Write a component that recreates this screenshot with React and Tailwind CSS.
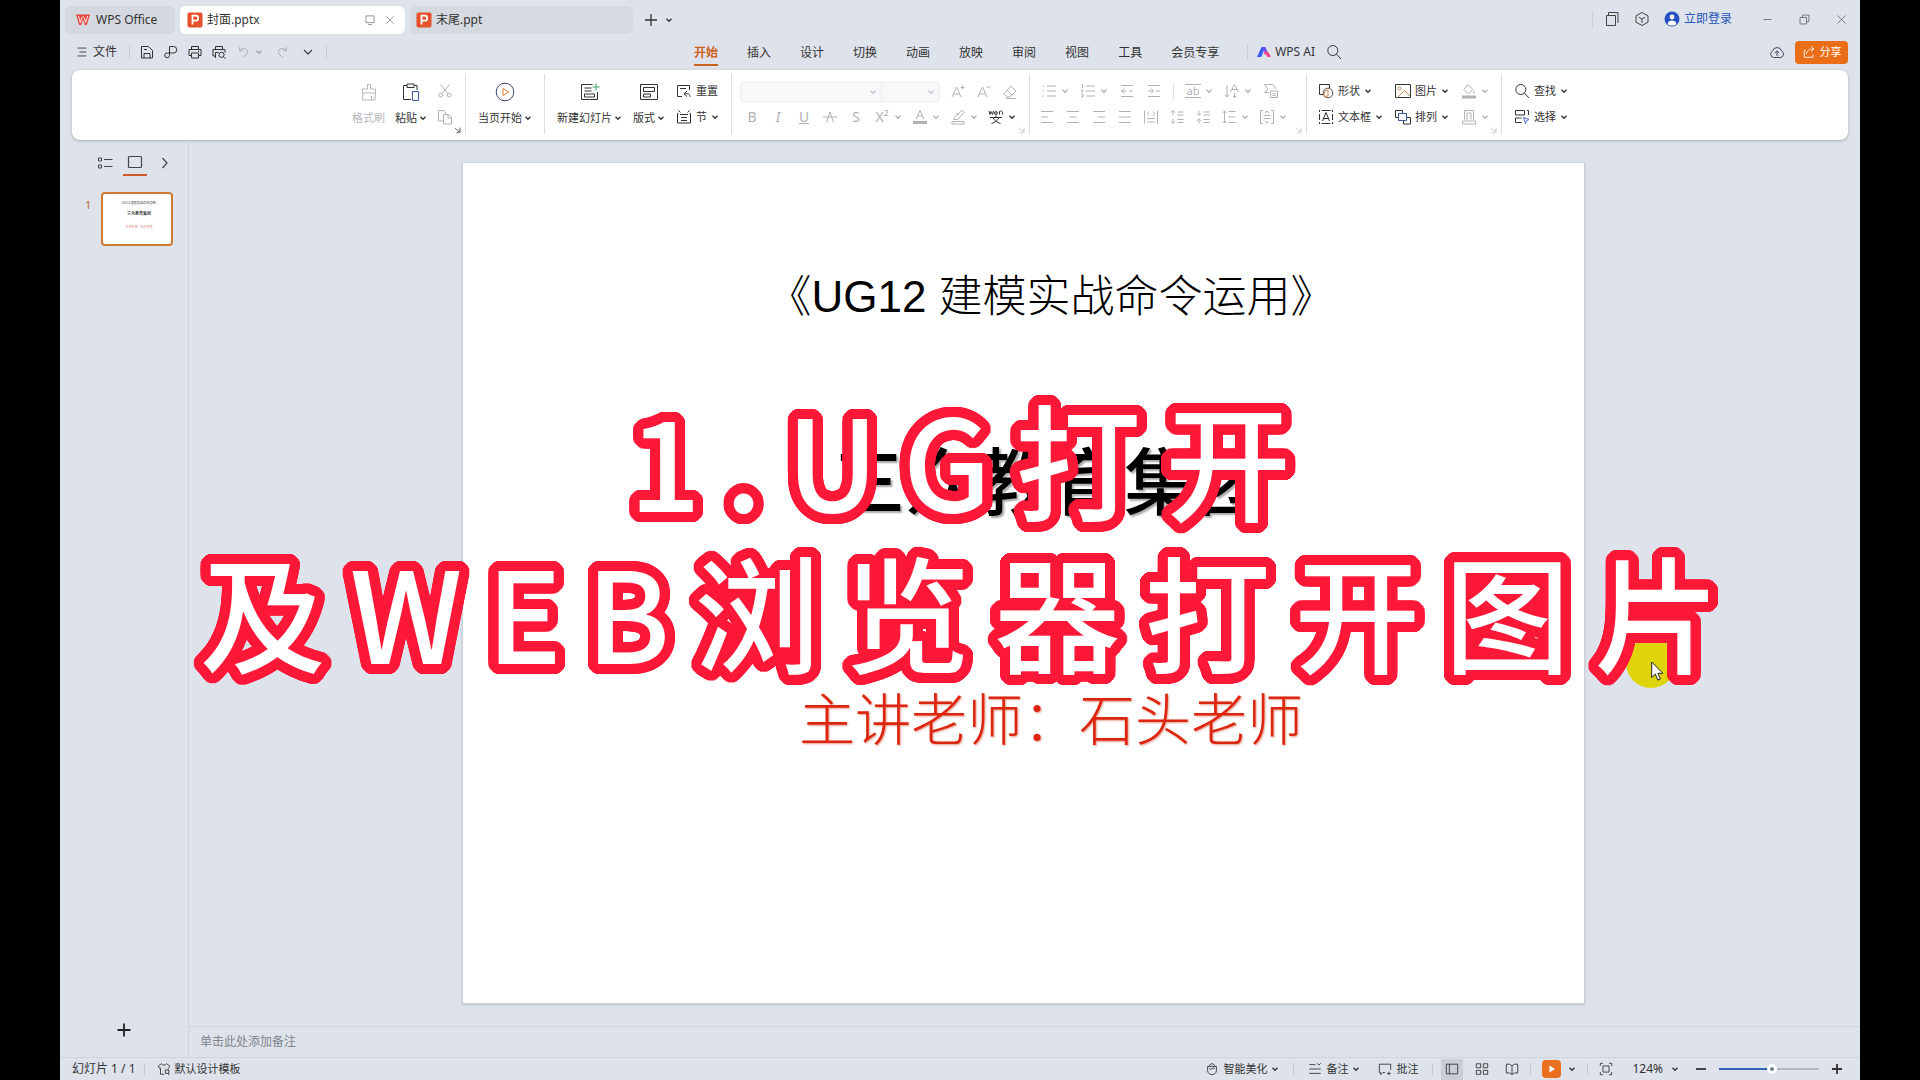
import React from "react";

/* ---------- icon helpers ---------- */
function Icon({ children, className = "size-4", box = 16, sw = 1 }) {
  return (
    <svg
      viewBox={`0 0 ${box} ${box}`}
      className={`shrink-0 ${className}`}
      fill="none"
      stroke="currentColor"
      strokeWidth={sw}
      aria-hidden="true"
    >
      {children}
    </svg>
  );
}

function Chevron({ className = "size-2" }) {
  return (
    <Icon box={8} sw={1.4} className={className}>
      <path d="M1.5 2.8 4 5.3 6.5 2.8" />
    </Icon>
  );
}

const WpsLogo = () => (
  <svg viewBox="0 0 16 16" className="size-4 shrink-0" aria-hidden="true">
    <path d="M1 2.500H15L11.800 13H9.800L8 7.500 6.200 13H4.200z" fill="#e5443b" />
    <path d="M3.500 4 5.300 10.500 7.300 4.500M8.600 4.500l2.100 6L12.600 4" fill="none" stroke="#fff" strokeWidth="0.900" />
  </svg>
);

const PptLogo = () => (
  <svg viewBox="0 0 16 16" className="size-4 shrink-0" aria-hidden="true">
    <rect x="0.5" y="0.5" width="15" height="15" rx="2" fill="#e4512b" />
    <path d="M5.5 12.5V3.7h3.200a2.500 2.500 0 0 1 0 5H5.5" fill="none" stroke="#fff" strokeWidth="1.8" />
  </svg>
);

const AiLogo = () => (
  <svg viewBox="0 0 16 16" className="size-4 shrink-0" aria-hidden="true">
    <path d="M1 13 5.600 3h3.700L5.300 13z" fill="#3c5cf5" />
    <path d="M6.600 3h2.800l2.200 5-3 .6z" fill="#6d4cf0" />
    <path d="M8.400 7.800c3-1 5 .6 6.300 5.200h-3.400c-.6-2.200-1.200-2.800-3.400-3z" fill="#f0428e" />
  </svg>
);

const icons = {
  menu: <path d="M3 3.5h10M5 8h8M3 12.5h10" />,
  save: <path d="M2.5 14V2.5h7l4 4V14zM5 14v-4.500h6V14M5 5.500h3" />,
  pdf: <path d="M6.500 9V2.500h4a3.200 3.200 0 0 1 0 6.500H4.500a2.400 2.400 0 1 0 2 2.600V9" />,
  print: <path d="M4.500 5V2.500h7V5M4 11.500H2V5.500h12v6h-2M4.500 9h7v5h-7zM11 7.300h1.200" />,
  preview: (
    <>
      <path d="M4.500 5V2.500h7V5M4.500 12H2V5.500h12v3M4.500 14V8.500h3" />
      <circle cx="10.500" cy="10.800" r="2.600" />
      <path d="m12.500 12.800 2 2" />
    </>
  ),
  undo: <path d="M3 2.500v4h4M3.200 6.300C6 2.500 12.500 3.500 12 8.300c-.3 2.500-2.500 4-5 5.700" />,
  redo: <path d="M13 2.500v4H9M12.800 6.300C10 2.500 3.500 3.500 4 8.300c.3 2.500 2.500 4 5 5.700" />,
  search: (
    <>
      <circle cx="6.800" cy="6.500" r="5" />
      <path d="m10.500 10.200 4.500 4.800" />
    </>
  ),
  cloud: <path d="M4.500 13.500a3.500 3.500 0 0 1-1-6.500 4.800 4.800 0 0 1 9.200 0 3.500 3.500 0 0 1-1 6.500zM8 12V7M5.800 9 8 6.800 10.200 9" />,
  share: <path d="M4.500 6H2.500v8h10v-3M5 10.500C5.500 6.500 8 4.500 13.500 4.500M10.500 1.500l3.200 3-3.200 3" />,
  monitor: <path d="M2.500 2.500h11v9h-11zM5.500 14h5" />,
  close: <path d="m3 3 10 10M13 3 3 13" />,
  min: <path d="M3 8h10" />,
  restore: <path d="M2.500 5.500h8v8h-8zM5.500 5.500v-3h8v8h-3" />,
  stack: <path d="M2.500 4.500h9v10h-9zM4.500 4V1.500h9.500V12" />,
  cube: <path d="M8 1.500 14 4.800v6.400L8 14.500 2 11.200V4.800zM4.800 6.200 8 8l3.200-1.800M8 8v4" />,
  cut: (
    <>
      <path d="M3.500 1.500 10.800 10.500M12.500 1.500 5.200 10.500" />
      <circle cx="3.800" cy="12" r="2" />
      <circle cx="12.200" cy="12" r="2" />
    </>
  ),
  copy: <path d="M6 12H1.500V1.500h5l2.500 2.500v1M6.500 5.500h5l3 3V15h-8zM11 5.500v3.500h3.500" />,
  reset: <path d="M6 13.500H1.500v-11h12V7M4 5.500h6M8 10.800l3-2.800M8 10.800l3 2.700M8 10.800h3.500c1.500 0 2.500 1.200 2.500 3" />,
  section: <path d="M1.500 4.500h1M1.500 4.500v9.500h13V4.500h-1M4 5.500h8M5 8.500h6M5 11.500h6M2.500 1.500l2 2M13.500 1.500l-2 2" />,
  aPlus: <path d="M2 13 6.500 3 11 13M3.500 10h6M12.500 1.500v4M10.500 3.500h4" />,
  aMinus: <path d="M2 13 6.500 3 11 13M3.500 10h6M10.500 3h4" />,
  eraser: <path d="M9 2 14 7l-6 6H5L2 9.500zM5 6l5 5M4 14.500h10" />,
  strike: <path d="M1 8h14M4.500 13.500 8 3l3.500 10.500" />,
  bullets: <path d="M6 3h9M6 8h9M6 13h9M1.500 3h1.500M1.500 8h1.500M1.500 13h1.500" />,
  numbers: <path d="M6 3h9M6 8h9M6 13h9M1.500 1.500h1v3.500M1 7h1.800v1.500H1.200M1 11h2v3H1" />,
  outdent: <path d="M2 2.500h12M2 13.500h12M2.500 8h5M10 8h4M5 5.500 2.500 8 5 10.500" />,
  indent: <path d="M2 2.500h12M2 13.500h12M2 8h5M10 8h4M5 5.500 7.500 8 5 10.500" />,
  textDir: <path d="M3 2v12M1 11.500 3 14l2-2.500M6.500 9 10.500 1.500 14.500 9M8 6.500h5M10.500 10v4.500M9 13l1.500 1.500L12 13" />,
  smartArt: <path d="M6 9.500H1.500L5 6 1.500 1.500H10L12 4v2M7.500 8h7v6.500h-7zM9.500 10.500h3M9.500 12.500h3" />,
  left: <path d="M2 2.500h12M2 8h7M2 13.500h12" />,
  center: <path d="M2 2.500h12M4.500 8h7M2 13.500h12" />,
  right: <path d="M2 2.500h12M7 8h7M2 13.500h12" />,
  justify: <path d="M2 2.500h12M2 8h12M2 13.500h12" />,
  distribute: <path d="M1.500 1.500v13M14.500 1.500v13M4 9.500h8M4 13h8M6 2.500 4.500 4.500 6 6.500M10 2.500l1.500 2L10 6.500" />,
  spaceUp: <path d="M8.500 3h6M8.500 6h6M8.500 10.500h6M8.500 13.500h6M4 1.500V6M2 3.500l2-2 2 2M4 10v4.500M2 12.500l2 2 2-2" />,
  spaceDown: <path d="M8.500 3h6M8.500 6h6M8.500 10.500h6M8.500 13.500h6M4 1.500V6M2 4.500l2 2 2-2M4 10v4.500M2 12l2-2 2 2" />,
  lineSpace: <path d="M7.500 2.500h7M7.500 8h7M7.500 13.500h7M3.500 2v12M1.500 4l2-2 2 2M1.500 12l2 2 2-2" />,
  alignBox: <path d="M4 1.500H1.500v13H4M12 1.500h2.500v13H12M4.500 6.500h7M4.500 9.500h7M6 4l2-2 2 2M6 12l2 2 2-2" />,
  fitBox: <path d="M1.500 4.500v-3h3M11.500 1.500h3v3M14.500 11.500v3h-3M4.500 14.500h-3v-3M4.500 4.500h7v7h-7z" />,
  shirt: <path d="M5 2 1.500 4.500 3 7.500l1-.5v7h4M5 2c1 2 5 2 6 0l3.500 2.500L13 7.500M9.500 9h4v4h-4zM12.500 13l1.500 2" />,
  beauty: <path d="M3 5h10v5c0 2.500-2.500 4.500-5 4.500S3 12.500 3 10zM5 5c0-4 6-4 6 0M5 7.500c2 2 4-1 6-.5" />,
  notes: <path d="M1.500 3h7M1.500 8h13M1.500 13h13M10.500 1.500l2 2 2-2" />,
  comment: <path d="M8 12H5.500L3 14.500V12H1.500V2.500h13V9M10.500 13h4M12.500 11v4" />,
  normal: <path d="M1.500 2.500h13v11h-13zM5 2.500v11" />,
  grid: <path d="M1.500 2h5v4.500h-5zM9.500 2h5v4.500h-5zM1.500 9.500h5V14h-5zM9.500 9.500h5V14h-5z" />,
  book: <path d="M8 4.500 5.500 2.500h-4v10h4l2.500 2 2.500-2h4v-10h-4zM8 4.500v10" />,
};

function G({ name, className = "size-4" }) {
  return <Icon className={className}>{icons[name]}</Icon>;
}

/* ---------- ribbon pieces ---------- */
function Group({ children, className, launcher, faded }) {
  return (
    <div className={`relative flex h-[60px] items-center border-r border-[#dcdfe3] last:border-r-0 ${className}`}>
      {children}
      {launcher && (
        <span className={`absolute right-1 bottom-0 ${faded ? "text-[#c9ccd0]" : "text-[#666]"}`}>
          <Icon box={8} className="size-[7px]">
            <path d="M1 1l5 5M6 2.500V6.500H2.500M7 .5v6" />
          </Icon>
        </span>
      )}
    </div>
  );
}

function Big({ icon, label, arrow, disabled }) {
  return (
    <button
      type="button"
      disabled={disabled}
      className="flex flex-col items-center gap-2 text-[#333] disabled:text-[#b5b7ba]"
    >
      {icon}
      <span className="flex items-center gap-[2px] whitespace-nowrap">
        {label}
        {arrow && <Chevron />}
      </span>
    </button>
  );
}

function Tool({ children, label, text, arrow, disabled }) {
  return (
    <button
      type="button"
      aria-label={label}
      disabled={disabled}
      className="flex h-4 items-center gap-1 whitespace-nowrap text-[#333] disabled:text-[#b0b2b5]"
    >
      {children}
      {text}
      {arrow && <Chevron />}
    </button>
  );
}

function Rows({ top, bottom }) {
  return (
    <div className="flex flex-col gap-[10px]">
      {top}
      {bottom}
    </div>
  );
}

const Glyph = ({ children, className = "" }) => (
  <span className={`flex size-4 items-center justify-center text-sm leading-4 ${className}`}>{children}</span>
);

const menuTabs = ["开始", "插入", "设计", "切换", "动画", "放映", "审阅", "视图", "工具", "会员专享"];

function TitleBar() {
  return (
    <header className="flex h-[34px] items-end pl-[5px]">
      <div role="tablist" className="flex h-7 items-stretch gap-[5px] text-[12px] text-[#333]">
        <button type="button" role="tab" className="flex w-[110px] items-center gap-[5px] rounded-md bg-[#d5d9df] pl-[10px]">
          <WpsLogo />
          WPS Office
        </button>
        <div className="flex w-[225px] items-center rounded-md bg-white pr-[9px] pl-[7px]">
          <button type="button" role="tab" aria-selected="true" className="flex grow items-center gap-1">
            <PptLogo />
            封面.pptx
          </button>
          <span className="flex items-center gap-2 text-[#777]">
            <G name="monitor" className="size-3" />
            <button type="button" aria-label="关闭"><G name="close" className="size-3" /></button>
          </span>
        </div>
        <button type="button" role="tab" className="flex w-[223px] items-center gap-1 rounded-md bg-[#d5d9e0] pl-[6px]">
          <PptLogo />
          末尾.ppt
        </button>
      </div>
      <div className="flex h-7 items-center gap-[6px] pl-[10px] text-[#333]">
        <button type="button" aria-label="新建">
          <Icon sw={1.3}><path d="M8 2v12M2 8h12" /></Icon>
        </button>
        <button type="button" aria-label="更多标签"><Chevron /></button>
      </div>
      <div className="ml-auto flex h-[30px] items-center pr-[12px] text-[#444]">
        <span className="mr-[11px] h-4 w-px bg-[#c9cdd4]" />
        <button type="button" aria-label="窗口"><G name="stack" /></button>
        <button type="button" aria-label="应用" className="ml-[14px]"><G name="cube" /></button>
        <button type="button" className="ml-[14px] flex items-center gap-1 text-[12px] text-[#2456b8]">
          <svg viewBox="0 0 16 16" className="size-4" aria-hidden="true">
            <circle cx="8" cy="8" r="7.500" fill="#2450c4" />
            <circle cx="8" cy="6" r="2.400" fill="#fff" />
            <path d="M3.500 13c.5-2.600 2.200-3.600 4.500-3.600s4 1 4.500 3.600c-2.500 2-6.500 2-9 0z" fill="#fff" />
          </svg>
          立即登录
        </button>
        <div className="ml-[29px] flex gap-6 text-[#666]">
          <button type="button" aria-label="最小化"><G name="min" className="size-[13px]" /></button>
          <button type="button" aria-label="还原"><G name="restore" className="size-[13px]" /></button>
          <button type="button" aria-label="关闭窗口"><G name="close" className="size-[13px]" /></button>
        </div>
      </div>
    </header>
  );
}

function MenuBar() {
  return (
    <div className="flex h-[36px] items-center pr-[12px] pl-[15px] text-[12px] text-[#333]">
      <div className="flex w-[619px] shrink-0 items-center">
        <button type="button" className="flex items-center gap-1 text-[12px]">
          <G name="menu" className="size-[14px]" />
          文件
        </button>
        <span className="mr-[9px] ml-3 h-4 w-px bg-[#c9cdd4]" />
        <div className="flex gap-2">
          {["save", "pdf", "print", "preview"].map((n) => (
            <button key={n} type="button" aria-label={n}><G name={n} /></button>
          ))}
        </div>
        <div className="flex items-center text-[#a3a7ae]">
          <button type="button" aria-label="撤销" className="ml-[10px] flex items-center gap-1"><G name="undo" className="size-[14px]" /><Chevron /></button>
          <button type="button" aria-label="重做" className="ml-3"><G name="redo" className="size-[14px]" /></button>
        </div>
        <button type="button" aria-label="自定义" className="ml-[13px] text-[#444]">
          <Icon box={12} className="size-3" sw={1.3}><path d="M2 4l4 4 4-4" /></Icon>
        </button>
        <span className="ml-3 h-4 w-px bg-[#c9cdd4]" />
      </div>
      <nav className="flex items-center gap-[29px] pt-px">
        {menuTabs.map((t, i) =>
          i === 0 ? (
            <button key={t} type="button" className="border-y-2 border-t-transparent border-b-[#cf5f1c] py-[2px] font-bold whitespace-nowrap text-[#cf5f1c]">{t}</button>
          ) : (
            <button key={t} type="button" className="whitespace-nowrap">{t}</button>
          )
        )}
      </nav>
      <span className="ml-7 h-4 w-px bg-[#c9cdd4]" />
      <button type="button" className="ml-2 flex items-center gap-[3px] text-[12px] whitespace-nowrap"><AiLogo />WPS AI</button>
      <button type="button" aria-label="搜索" className="ml-[11px]"><G name="search" /></button>
      <button type="button" aria-label="云同步" className="mr-[10px] ml-auto text-[#40455c]"><G name="cloud" /></button>
      <button type="button" className="flex h-[23px] w-[53px] items-center justify-center gap-1 rounded bg-[#ea6d17] text-[11px] text-white">
        <G name="share" className="size-[14px]" />
        分享
      </button>
    </div>
  );
}

function Ribbon() {
  return (
    <section className="mx-3 flex h-[70px] justify-center rounded-lg bg-white pt-1 text-[11px] leading-4 shadow-[0_1px_3px_rgba(60,70,90,0.35)]">
      <Group className="gap-[10px] pr-[12px]" launcher>
        <Big
          disabled
          label="格式刷"
          icon={<Icon box={20} className="size-5"><path d="M8.500 2.500h3v4.500h5v4h-13v-4h5zM4 11l-.5 7h12.500l.5-7M12.500 14v4" /></Icon>}
        />
        <Big
          label="粘贴"
          arrow
          icon={
            <Icon box={20} className="size-5">
              <path d="M6 3.500H2.500v14H10M13.500 3.500h2.500V8M6 2h7v3.500H6z" />
              <path d="M11.500 9.500h6v9h-6z" stroke="#3d5a9c" />
            </Icon>
          }
        />
        <Rows
          top={<Tool label="剪切" disabled><G name="cut" /></Tool>}
          bottom={<Tool label="复制" disabled><G name="copy" /></Tool>}
        />
      </Group>

      <Group className="px-3">
        <Big
          label="当页开始"
          arrow
          icon={
            <Icon box={20} className="size-5">
              <circle cx="10" cy="10" r="8.800" stroke="#3b4668" />
              <path d="m8 6.500 5.500 3.500L8 13.500z" stroke="#d9822f" />
            </Icon>
          }
        />
      </Group>

      <Group className="gap-[11px] px-3">
        <Big
          label="新建幻灯片"
          arrow
          icon={
            <Icon box={20} className="size-5">
              <path d="M12.500 2.500H1.500v15h16V10M4.500 6h7M4.500 9h7M4.500 12h10v3h-10z" />
              <path d="M16 1.500v7M12.500 5H19.500" stroke="#3fa36c" />
            </Icon>
          }
        />
        <Big
          label="版式"
          arrow
          icon={<Icon box={20} className="size-5"><path d="M1.500 2.500h17v15h-17zM4.500 5.500h11v4h-11zM4.500 12h7v3h-7z" /></Icon>}
        />
        <Rows
          top={<Tool text="重置"><G name="reset" /></Tool>}
          bottom={<Tool text="节" arrow><G name="section" /></Tool>}
        />
      </Group>

      <Group className="pr-[11px] pl-2" launcher faded>
        <div className="flex flex-col gap-2">
          <div className="flex items-center gap-[10px]">
            <div className="-my-px flex h-5 w-[200px] rounded-sm border border-[#ebedef] bg-[#f7f8f9] text-[#c6c9cd]">
              <label className="relative flex w-[141px] items-center border-r border-[#ebedef]">
                <select aria-label="字体" disabled className="size-full appearance-none" />
                <span className="pointer-events-none absolute right-1"><Chevron /></span>
              </label>
              <label className="relative flex grow items-center">
                <select aria-label="字号" disabled className="size-full appearance-none" />
                <span className="pointer-events-none absolute right-1"><Chevron /></span>
              </label>
            </div>
            <Tool label="增大字号" disabled><G name="aPlus" /></Tool>
            <Tool label="减小字号" disabled><G name="aMinus" /></Tool>
            <Tool label="清除格式" disabled><G name="eraser" /></Tool>
          </div>
          <div className="flex items-center gap-[10px] pl-1">
            <Tool disabled><Glyph>B</Glyph></Tool>
            <Tool disabled><Glyph className="italic">I</Glyph></Tool>
            <Tool disabled><Glyph className="underline">U</Glyph></Tool>
            <Tool label="删除线" disabled><G name="strike" /></Tool>
            <Tool disabled><Glyph>S</Glyph></Tool>
            <Tool disabled arrow><Glyph>X²</Glyph></Tool>
            <Tool label="字体颜色" disabled arrow>
              <Icon><path d="M4 10 8 1.500 12 10M5.500 7h5" /><rect x="1" y="12" width="14" height="3" fill="currentColor" stroke="none" /></Icon>
            </Tool>
            <Tool label="突出显示" disabled arrow>
              <Icon><path d="M3.500 10.500h4L14 3.500 12 1.500 5 7.500zM9 6l-3-2M2 12.500h12v2.500H2z" /></Icon>
            </Tool>
            <Tool label="拼音指南" arrow>
              <Icon><path d="M1 2l1 3.500L3.200 2.500 4.500 5.500 5.500 2M6.500 4h3c0-2-3-2-3 0s2 2 3 1M11.500 5.500v-3c1.500-1 3-.5 3 1v2M2 8.500h12M8 6.500v2M5 8.500c1 3 4 5 7.500 6M11 8.500c-1 3-4 5-7.500 6" /></Icon>
            </Tool>
          </div>
        </div>
      </Group>

      <Group className="pr-[19px] pl-[9px]" launcher faded>
        <Rows
          top={
            <div className="flex gap-[11px] pl-[2px]">
              <Tool label="项目符号" disabled arrow><G name="bullets" /></Tool>
              <Tool label="编号" disabled arrow><G name="numbers" /></Tool>
              <Tool label="减少缩进" disabled><G name="outdent" /></Tool>
              <Tool label="增加缩进" disabled><G name="indent" /></Tool>
              <span className="w-px bg-[#dcdfe3]" />
              <Tool label="对齐" disabled arrow>
                <span className="flex h-[14px] w-4 items-center justify-center border-y border-current text-[11px] leading-3">ab</span>
              </Tool>
              <Tool label="文字方向" disabled arrow><G name="textDir" /></Tool>
              <Tool label="智能图形" disabled><G name="smartArt" /></Tool>
            </div>
          }
          bottom={
            <div className="flex gap-[10px]">
              {["left", "center", "right", "justify", "distribute", "spaceUp", "spaceDown"].map((n) => (
                <Tool key={n} label={n} disabled><G name={n} /></Tool>
              ))}
              <Tool label="行距" disabled arrow><G name="lineSpace" /></Tool>
              <Tool label="对齐文本" disabled arrow><G name="alignBox" /></Tool>
            </div>
          }
        />
      </Group>

      <Group className="gap-3 pr-3 pl-[11px]" launcher faded>
        <Rows
          top={
            <Tool text="形状" arrow>
              <Icon><path d="M5 11.500H1.500v-10h10V5" /><circle cx="10" cy="10" r="4.800" stroke="#555" /><path d="M6 13.500V11a4 4 0 0 1 4-4v6z" stroke="#d08a58" /></Icon>
            </Tool>
          }
          bottom={
            <Tool text="文本框" arrow>
              <Icon><path d="M3.500 1.500h9M3.500 14.500h9M4.500 12 8 3.500l3.500 8.500M5.500 9.500h5M1.500 1v2M1.500 5v6M1.500 13v2M14.500 1v2M14.500 5v6M14.500 13v2" /></Icon>
            </Tool>
          }
        />
        <Rows
          top={
            <Tool text="图片" arrow>
              <Icon><path d="M.5 1.500h15v13H.5z" /><circle cx="4.500" cy="5.500" r="1.500" stroke="#d08a58" /><path d="m2.500 14.500 7-7 5.500 5.500" stroke="#d08a58" /></Icon>
            </Tool>
          }
          bottom={
            <Tool text="排列" arrow>
              <Icon><path d="M3.500 8.500h-3v-7h7v3" /><path d="M3.500 4.500h8v7h-8z" stroke="#3d5a9c" /><path d="M12 8.500h3.500v6.500H8.500v-3" /></Icon>
            </Tool>
          }
        />
        <Rows
          top={
            <Tool label="填充" disabled arrow>
              <Icon><path d="M7 1.500 12 6.500 7.500 11 3 6.500zM13 8v2.500" /><rect x="1" y="12.500" width="14" height="3" fill="currentColor" stroke="none" /></Icon>
            </Tool>
          }
          bottom={
            <Tool label="轮廓" disabled arrow>
              <Icon><path d="M3.500 10.500v-9h9v9M6 10.500V4h4v6.500M1.500 12h13v3h-13z" /></Icon>
            </Tool>
          }
        />
      </Group>

      <Group className="pl-3">
        <Rows
          top={<Tool text="查找" arrow><G name="search" /></Tool>}
          bottom={
            <Tool text="选择" arrow>
              <Icon><path d="M1.500 1.500h9v4.500h-9zM13 1.500h1.500V6M7.500 13.500h-6V9h6" /><path d="m9.500 8.500 5.500 2-2.500 1.300-1 2.700z" stroke="#4a5fc4" /></Icon>
            </Tool>
          }
        />
      </Group>
    </section>
  );
}

function Sidebar() {
  return (
    <aside className="flex w-[129px] shrink-0 flex-col border-r border-[#cfd4dc] text-[#40444c]">
      <div className="flex h-[36px] items-end pl-[37px]">
        <button type="button" aria-label="大纲" className="pb-[5px]">
          <Icon><path d="M1.500 3h3v3h-3zM1.500 10h3v3h-3zM7 4.500h8.500M7 11.500h8.500" /></Icon>
        </button>
        <button type="button" aria-label="幻灯片" className="ml-[10px] flex w-6 justify-center border-b-2 border-[#d2592a] pb-[4px]">
          <Icon sw={1.2}><rect x="1.500" y="2.500" width="13" height="11" rx="1" /></Icon>
        </button>
        <button type="button" aria-label="收起" className="ml-[10px] pb-[5px]">
          <Icon sw={1.2}><path d="m5.500 3 4.500 5-4.500 5" /></Icon>
        </button>
      </div>
      <div className="flex gap-[10px] pt-4 pl-[25px]">
        <span className="pt-[5px] text-[11px] leading-4 text-[#c26a35]">1</span>
        <button type="button" aria-label="第 1 页" className="flex h-[54px] w-[72px] flex-col items-center rounded border-2 border-[#d07b34] bg-white pt-[6px] leading-none">
          <svg viewBox="0 0 64 44" className="w-16" aria-hidden="true">
            <g fontFamily='"Noto Sans CJK SC", sans-serif' textAnchor="middle">
              <text x="34" y="4" fontSize="3" fill="#333">《UG12 建模实战命令运用》</text>
              <text x="34" y="15" fontSize="4" fill="#111" fontWeight="500">三众教育集团</text>
              <text x="34" y="28" fontSize="3" fill="#d88">主讲老师：石头老师</text>
            </g>
          </svg>
        </button>
      </div>
      <button type="button" aria-label="新建幻灯片" className="mt-auto mb-[19px] ml-[56px] self-start text-[#222]">
        <Icon sw={1.8}><path d="M8 1.500v13M1.500 8h13" /></Icon>
      </button>
    </aside>
  );
}

function Slide() {
  return (
    <div className="flex min-h-0 grow justify-center py-[22px] pr-[2px]">
      <article className="flex aspect-[4/3] h-full flex-col items-center border border-[#cdd1d8] bg-white pt-[102px] pl-[55px] font-['Liberation_Sans','Noto_Sans_CJK_SC',sans-serif] font-light whitespace-nowrap shadow-[0_1px_2px_rgba(60,70,90,0.25)]">
        <h1 className="text-[44px] leading-[64px] text-black">《UG12 建模实战命令运用》</h1>
        <p className="mt-[107px] text-[73px] leading-[96px] font-medium text-black [text-shadow:2px_2px_2px_rgba(0,0,0,0.35)]">三众教育集团</p>
        <p className="mt-[149px] text-[56px] leading-[80px] text-[#dc2610] [text-shadow:1px_1px_2px_rgba(200,60,30,0.5)]">主讲老师：石头老师</p>
      </article>
    </div>
  );
}

function StatusBar() {
  const bar = <span className="h-3 w-px bg-[#c6cad1]" />;
  return (
    <footer className="flex h-[23px] shrink-0 items-center border-t border-[#cfd4dc] pr-[17px] pl-3 text-[11px] whitespace-nowrap text-[#333]">
      <span className="text-[12px]">幻灯片 1 / 1</span>
      <span className="mr-3 ml-2 h-3 w-px bg-[#c6cad1]" />
      <button type="button" className="flex items-center gap-1"><G name="shirt" className="size-[14px]" />默认设计模板</button>
      <div className="ml-auto flex items-center gap-[14px]">
        <button type="button" className="flex items-center gap-1"><G name="beauty" className="size-[14px]" />智能美化<Chevron /></button>
        {bar}
        <button type="button" className="flex items-center gap-1"><G name="notes" className="size-[14px]" />备注<Chevron /></button>
        <button type="button" className="ml-1 flex items-center gap-1"><G name="comment" className="size-[14px]" />批注</button>
        {bar}
      </div>
      <div className="ml-2 flex items-center">
        <button type="button" aria-label="普通视图" className="flex h-[21px] w-[22px] items-center justify-center bg-[#c9cdd4]"><G name="normal" className="size-[14px]" /></button>
        <button type="button" aria-label="浏览视图" className="ml-3"><G name="grid" className="size-[14px]" /></button>
        <button type="button" aria-label="阅读视图" className="ml-4"><G name="book" className="size-[14px]" /></button>
        <span className="mx-[11px] h-3 w-px bg-[#c6cad1]" />
        <button type="button" aria-label="放映" className="flex h-[18px] w-[19px] items-center justify-center rounded-sm bg-[#e9701f]">
          <svg viewBox="0 0 8 8" className="size-2" aria-hidden="true"><path d="M1.500 0.500 7 4 1.500 7.500z" fill="#fff" /></svg>
        </button>
        <button type="button" aria-label="放映选项" className="ml-[7px]"><Chevron /></button>
        <span className="mx-[11px] h-3 w-px bg-[#c6cad1]" />
        <button type="button" aria-label="适应窗口"><G name="fitBox" className="size-[14px]" /></button>
        <button type="button" className="ml-[19px] flex items-center gap-2 text-[12px]">124%<Chevron /></button>
        <button type="button" aria-label="缩小" className="ml-4"><Icon className="size-3" box={12} sw={1.8}><path d="M1 6h10" /></Icon></button>
        <input
          type="range"
          aria-label="缩放"
          min="0"
          max="100"
          defaultValue="53"
          className="mx-3 h-[2px] w-[100px] appearance-none bg-[linear-gradient(90deg,#3461b8_53%,#b4b8bf_53%)] [&::-webkit-slider-thumb]:size-[10px] [&::-webkit-slider-thumb]:appearance-none [&::-webkit-slider-thumb]:rounded-full [&::-webkit-slider-thumb]:border-[3px] [&::-webkit-slider-thumb]:border-white [&::-webkit-slider-thumb]:bg-[#6b7f86]"
        />
        <button type="button" aria-label="放大"><Icon className="size-3" box={12} sw={1.8}><path d="M6 1v10M1 6h10" /></Icon></button>
      </div>
    </footer>
  );
}

/* Video title laid over the window; the ring of shadows gives a round-cornered outline */
const outlineOffsets = [
  [10, 0], [10, 1], [10, 2], [10, 3], [9, 4], [9, 5], [8, 6], [7, 7],
  [6, 8], [5, 9], [4, 9], [3, 10], [2, 10], [1, 10],
];
const outline = outlineOffsets
  .flatMap(([x, y]) => [[x, y], [-y, x], [-x, -y], [y, -x]])
  .map(([x, y]) => `${x}px ${y}px #fd1838`)
  .join(",");

function Caption() {
  const lines = ["1.UG打开", "及WEB浏览器打开图片"];
  return (
    <div
      style={{ textShadow: outline }}
      className="pointer-events-none absolute inset-x-0 top-[381px] flex flex-col items-center font-['Noto_Sans_CJK_SC',sans-serif] text-[126px] leading-[152px] font-medium text-white"
    >
      {lines.map((line) => (
        <p key={line} className="flex gap-6 whitespace-nowrap">
          {[...line].map((ch, i) => (
            <span key={i}>{ch}</span>
          ))}
        </p>
      ))}
    </div>
  );
}

export default function App() {
  return (
    <div className="relative h-screen overflow-hidden bg-black px-[60px] font-['Noto_Sans','Noto_Sans_CJK_SC',sans-serif]">
      <div className="flex h-full flex-col bg-[#dee2ea]">
        <TitleBar />
        <MenuBar />
        <Ribbon />
        <div className="flex min-h-0 grow">
          <Sidebar />
          <main className="flex min-w-0 grow flex-col">
            <Slide />
            <label className="flex h-[31px] shrink-0 items-center border-t border-[#cfd4dc] pl-[11px]">
              <input
                type="text"
                aria-label="备注"
                placeholder="单击此处添加备注"
                className="w-full text-[12px] placeholder:text-[#80858e]"
              />
            </label>
          </main>
        </div>
        <StatusBar />
      </div>
      <div className="absolute top-[638px] left-[86%] size-[50px] -translate-x-1/2 rounded-full bg-[#dfd30c]" />
      <Caption />
      <svg viewBox="0 0 13 20" className="absolute top-[661px] left-[86%] h-5 w-[13px]" aria-hidden="true">
        <path d="M.7 1v15.500l3.600-3.400 2.500 6 2.600-1.100-2.500-5.700h5z" fill="#fff" stroke="#222" />
      </svg>
    </div>
  );
}
